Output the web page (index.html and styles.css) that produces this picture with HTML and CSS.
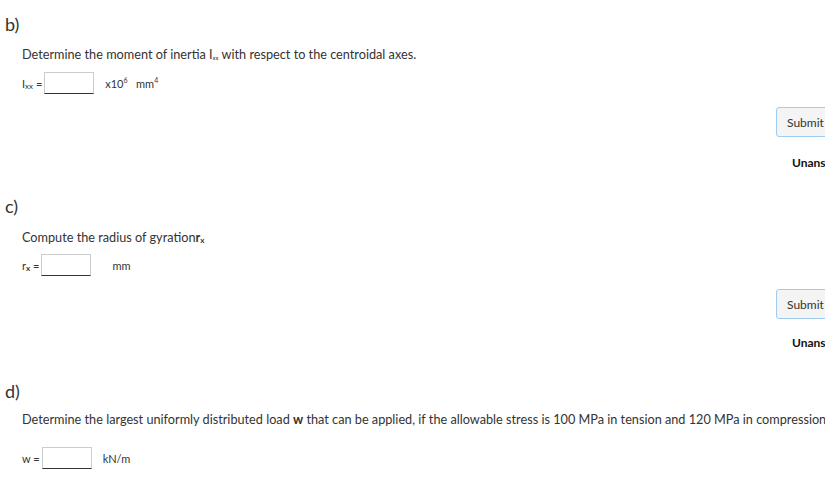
FILE: index.html
```html
<!DOCTYPE html>
<html>
<head>
<meta charset="utf-8">
<link rel="stylesheet" href="styles.css">
</head>
<body>
<div class="page">
  <section class="part part-b">
    <div class="part-label">b)</div>
    <div class="question">Determine the moment of inertia I<sub class="tiny">xx</sub> with respect to the centroidal axes.</div>
    <div class="answer-row">
      <span class="var">I<sub>xx</sub> =</span>
      <span class="field"></span>
      <span class="unit">x10<sup>6</sup>&nbsp;&nbsp; mm<sup>4</sup></span>
    </div>
    <div class="submit-row"><button class="submit">Submit</button></div>
    <div class="status-row"><span class="status">Unanswered</span></div>
  </section>
  <section class="part part-c">
    <div class="part-label">c)</div>
    <div class="question">Compute the radius of gyration<b>r<sub>x</sub></b></div>
    <div class="answer-row">
      <span class="var">r<sub><b>x</b></sub> =</span>
      <span class="field"></span>
      <span class="unit unit-wide">mm</span>
    </div>
    <div class="submit-row"><button class="submit">Submit</button></div>
    <div class="status-row"><span class="status">Unanswered</span></div>
  </section>
  <section class="part part-d">
    <div class="part-label">d)</div>
    <div class="question">Determine the largest uniformly distributed load <b>w</b> that can be applied, if the allowable stress is 100 MPa in tension and 120 MPa in compression.</div>
    <div class="answer-row">
      <span class="var">w =</span>
      <span class="field"></span>
      <span class="unit">kN/m</span>
    </div>
  </section>
</div>
</body>
</html>
```
FILE: styles.css
```css
html, body {
  margin: 0;
  padding: 0;
  background: #fff;
  overflow: hidden;
}
body {
  font-family: "Lato", "Liberation Sans", sans-serif;
  color: #333;
  font-size: 12.7px;
}
.page {
  width: 900px;
  padding-top: 13px;
}
.part {
  padding-left: 5px;
}
.part-label {
  font-size: 18px;
  line-height: 22px;
  color: #333;
}
.question {
  margin-top: 10px;
  padding-left: 17px;
  line-height: 18px;
  height: 18px;
  white-space: nowrap;
}
sub, sup {
  line-height: 0;
}
.question sub {
  font-size: 8px;
  vertical-align: -1px;
}
.question .tiny {
  font-size: 6px;
}
.answer-row {
  margin-top: 9px;
  padding-left: 17px;
  display: flex;
  align-items: center;
  height: 22px;
  font-size: 11px;
}
.var sub {
  font-size: 8px;
  vertical-align: -1px;
}
sup {
  font-size: 7px;
  vertical-align: 5px;
}
.field {
  display: inline-block;
  width: 48px;
  height: 20px;
  border: 1px solid #ccc;
  border-bottom: 1px solid #333;
  margin-left: 2px;
}
.unit {
  margin-left: 11px;
}
.unit-wide {
  margin-left: 21px;
}
.submit-row {
  margin-top: 13px;
  padding-left: 771px;
  height: 30px;
}
.submit {
  font-family: inherit;
  font-size: 12px;
  color: #333;
  background: #f4f4f4;
  border: 1px solid #9ecbf0;
  border-radius: 3px;
  height: 30px;
  padding: 0 10px;
  display: block;
}
.status-row {
  margin-top: 17px;
  padding-left: 787px;
  line-height: 16px;
  height: 16px;
}
.status {
  font-weight: bold;
  font-size: 12px;
  color: #111;
}
.part-c {
  margin-top: 25px;
}
.part-c .question {
  margin-top: 11px;
}
.part-c .answer-row {
  margin-top: 8px;
}
.part-c .status-row {
  margin-top: 15px;
}
.part-d {
  margin-top: 30px;
}
.part-d .question {
  margin-top: 8px;
}
.part-d .answer-row {
  margin-top: 19px;
}
```
